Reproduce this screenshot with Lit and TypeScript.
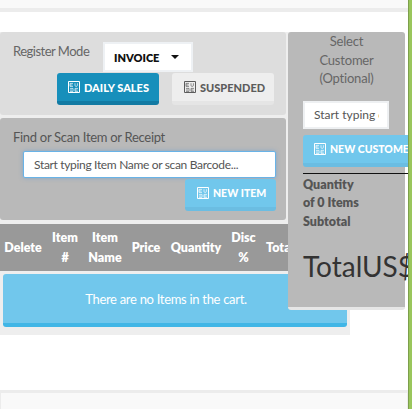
import { LitElement, html, css, svg } from "lit";
import { customElement } from "lit/decorators.js";

const tofu = () => html`<svg class="tofu" viewBox="0 0 12 12" width="12" height="12" aria-hidden="true">
  ${svg`<path fill="none" stroke="currentColor" stroke-width="1" d="M.5.5h11v11H.5z"/>
  <path fill="none" stroke="currentColor" stroke-width=".8" opacity=".85" d="M2 2.4h3M2 2.4v3h3M2 4h2.5M7 2.2v2.2q0 1 1.2 1t1.2-1V2.2M2 7.4h3v3H2M2 9h2M7 7.4h3M7 7.4v3h3M7 9h2.5"/>`}
</svg>`;

@customElement("app-root")
export class AppRoot extends LitElement {
  static styles = css`
    :host {
      display: block;
      position: relative;
      width: 412px;
      height: 409px;
      overflow: hidden;
      background: #fff;
      font-family: "Lato", "Noto Sans", sans-serif;
      color: #555;
      box-sizing: border-box;
    }
    * { box-sizing: border-box; }
    .page {
      width: 408px;
      height: 409px;
      display: flex;
      flex-direction: column;
      overflow: hidden;
    }
    .top {
      flex: none;
      height: 12px;
      background: #f9f9f9;
      border-bottom: 4px solid #ececec;
    }
    .stage {
      flex: none;
      margin-top: 20px;
      height: 303px;
      display: grid;
      grid-template-columns: 288px 62px 58px;
      align-items: start;
    }
    .cart-col {
      grid-column: 1 / 3;
      grid-row: 1;
      display: flex;
      flex-direction: column;
      background: #eee;
      height: 303px;
    }
    .mode {
      width: 286px;
      height: 83px;
      background: #ddd;
      border-radius: 3px;
      padding: 10px 12px 0 13px;
      display: flex;
      flex-direction: column;
    }
    .mode-row { display: flex; align-items: flex-start; }
    .mode-label { font-size: 13px; letter-spacing: -0.5px; line-height: 18px; width: 90px; color: #666; }
    .select {
      width: 90px;
      height: 30px;
      background: #fff;
      border: 2px solid #eef1f4;
      display: flex;
      align-items: center;
      padding-left: 9px;
      gap: 12px;
      font-size: 11px;
      font-weight: 800;
      color: #111;
    }
    .caret { width: 0; height: 0; border: 4px solid transparent; border-top-color: #111; border-bottom: 0; }
    .mode-btns { display: flex; gap: 13px; margin-left: 44px; margin-top: 1px; }
    .btn {
      display: inline-flex;
      align-items: center;
      gap: 4px;
      height: 32px;
      border-radius: 3px;
      font-size: 11px;
      font-weight: 900;
      white-space: nowrap;
      border-bottom: 4px solid transparent;
    }
    .tofu { flex: none; }
    .daily { width: 103px; background: #178fbb; border-bottom-color: #127aa3; color: #fff; padding-left: 11px; }
    .susp { width: 103px; background: #eee; border-bottom-color: #e5e5e5; color: #5c5c5c; padding-left: 12px; }
    .find {
      width: 286px;
      height: 102px;
      margin-top: 3px;
      background: #b9b9b9;
      border-radius: 3px;
      padding: 10px 10px 0 13px;
      display: flex;
      flex-direction: column;
    }
    .find-label { font-size: 13px; letter-spacing: -0.3px; line-height: 18px; color: #555; }
    .find-input {
      margin: 5px 0 0 10px;
      width: 253px;
      height: 27px;
      background: #fff;
      border: 1px solid #69b3e7;
      border-radius: 2px;
      box-shadow: 0 0 4px rgba(80, 150, 220, .5);
      padding-left: 10px;
      font-size: 12px;
      letter-spacing: -0.33px;
      line-height: 25px;
      color: #555;
      white-space: nowrap;
    }
    .new-item {
      align-self: flex-end;
      width: 91px;
      height: 32px;
      margin-top: 1px;
      background: #71c7ec;
      border-bottom-color: #6bbde2;
      color: #fff;
      padding-left: 12px;
      font-size: 10.5px;
    }
    .thead {
      margin-top: 4px;
      height: 47px;
      width: 350px;
      background: #999;
      display: grid;
      grid-template-columns: 46px 38px 42px 40px 60px 35px 38px;
      align-items: center;
      color: #fff;
      font-size: 12.5px;
      font-weight: 800;
      line-height: 20px;
      text-align: center;
      overflow: hidden;
      white-space: nowrap;
    }
    .alert {
      margin: 3px 3px 0 3px;
      height: 53px;
      padding-right: 18px;
      background: #71c7ec;
      border-bottom: 4px solid #41b6e6;
      border-radius: 3px;
      display: flex;
      align-items: center;
      justify-content: center;
      color: #fff;
      font-size: 13px;
      letter-spacing: -0.3px;
    }
    .cust {
      grid-column: 2 / 4;
      grid-row: 1;
      z-index: 1;
      width: 117px;
      height: 278px;
      background: #b9b9b9;
      border-radius: 3px;
      border-bottom: 3px solid #e6e6e6;
      padding-left: 15px;
    }
    .cust-title {
      margin-left: -15px;
      width: 117px;
      text-align: center;
      font-size: 13px;
      letter-spacing: -0.2px;
      line-height: 18.5px;
      color: #666;
    }
    .cust-input {
      margin-top: 13px;
      width: 86px;
      height: 28px;
      background: #fff;
      border: 2px solid #eef0f2;
      padding-left: 9px;
      font-size: 12px;
      line-height: 24px;
      color: #555;
    }
    .cust-value {
      display: block;
      width: 65px;
      overflow: hidden;
      white-space: nowrap;
    }
    .new-cust {
      margin-top: 6px;
      width: 140px;
      height: 32px;
      background: #71c7ec;
      border-bottom-color: #6bbde2;
      color: #fff;
      padding-left: 11px;
      font-size: 10.5px;
      overflow: hidden;
      justify-content: flex-start;
    }
    .rule { width: 105px; height: 1px; background: #111; margin-top: 6px; }
    .stats { margin-top: 2px; font-size: 12.5px; font-weight: 800; line-height: 18.5px; color: #555; white-space: nowrap; }
    .total { margin-top: 15px; font-size: 28px; line-height: 40px; color: #333; white-space: nowrap; }
    .spacer { flex: 1; }
    .bottom {
      flex: none;
      height: 19px;
      background: #f9f9f9;
      border-top: 3px solid #ececec;
      border-left: 1px solid #ececec;
      border-right: 1px solid #ececec;
    }
    .green {
      position: absolute;
      top: 0;
      right: 0;
      bottom: 0;
      width: 4px;
      background: #9ac65c;
      border-left: 1px solid #7d9f4c;
    }
  `;

  render() {
    return html`
      <div class="page">
        <div class="top"></div>
        <div class="stage">
          <div class="cart-col">
            <section class="mode">
              <div class="mode-row">
                <span class="mode-label">Register Mode</span>
                <div class="select">INVOICE <span class="caret"></span></div>
              </div>
              <div class="mode-btns">
                <span class="btn daily">${tofu()}DAILY SALES</span>
                <span class="btn susp">${tofu()}SUSPENDED</span>
              </div>
            </section>
            <section class="find">
              <div class="find-label">Find or Scan Item or Receipt</div>
              <div class="find-input">Start typing Item Name or scan Barcode...</div>
              <span class="btn new-item">${tofu()}NEW ITEM</span>
            </section>
            <div class="thead">
              <span>Delete</span><span>Item<br />#</span><span>Item<br />Name</span><span>Price</span><span>Quantity</span><span>Disc<br />%</span><span>Total</span>
            </div>
            <div class="alert">There are no Items in the cart.</div>
          </div>
          <aside class="cust">
            <div class="cust-title">Select<br />Customer<br />(Optional)</div>
            <div class="cust-input"><span class="cust-value">Start typing customer</span></div>
            <span class="btn new-cust">${tofu()}NEW CUSTOMER</span>
            <div class="rule"></div>
            <div class="stats">Quantity<br />of 0 Items<br />Subtotal</div>
            <div class="total">TotalUS$</div>
          </aside>
        </div>
        <div class="spacer"></div>
        <div class="bottom"></div>
      </div>
      <div class="green"></div>
    `;
  }
}
